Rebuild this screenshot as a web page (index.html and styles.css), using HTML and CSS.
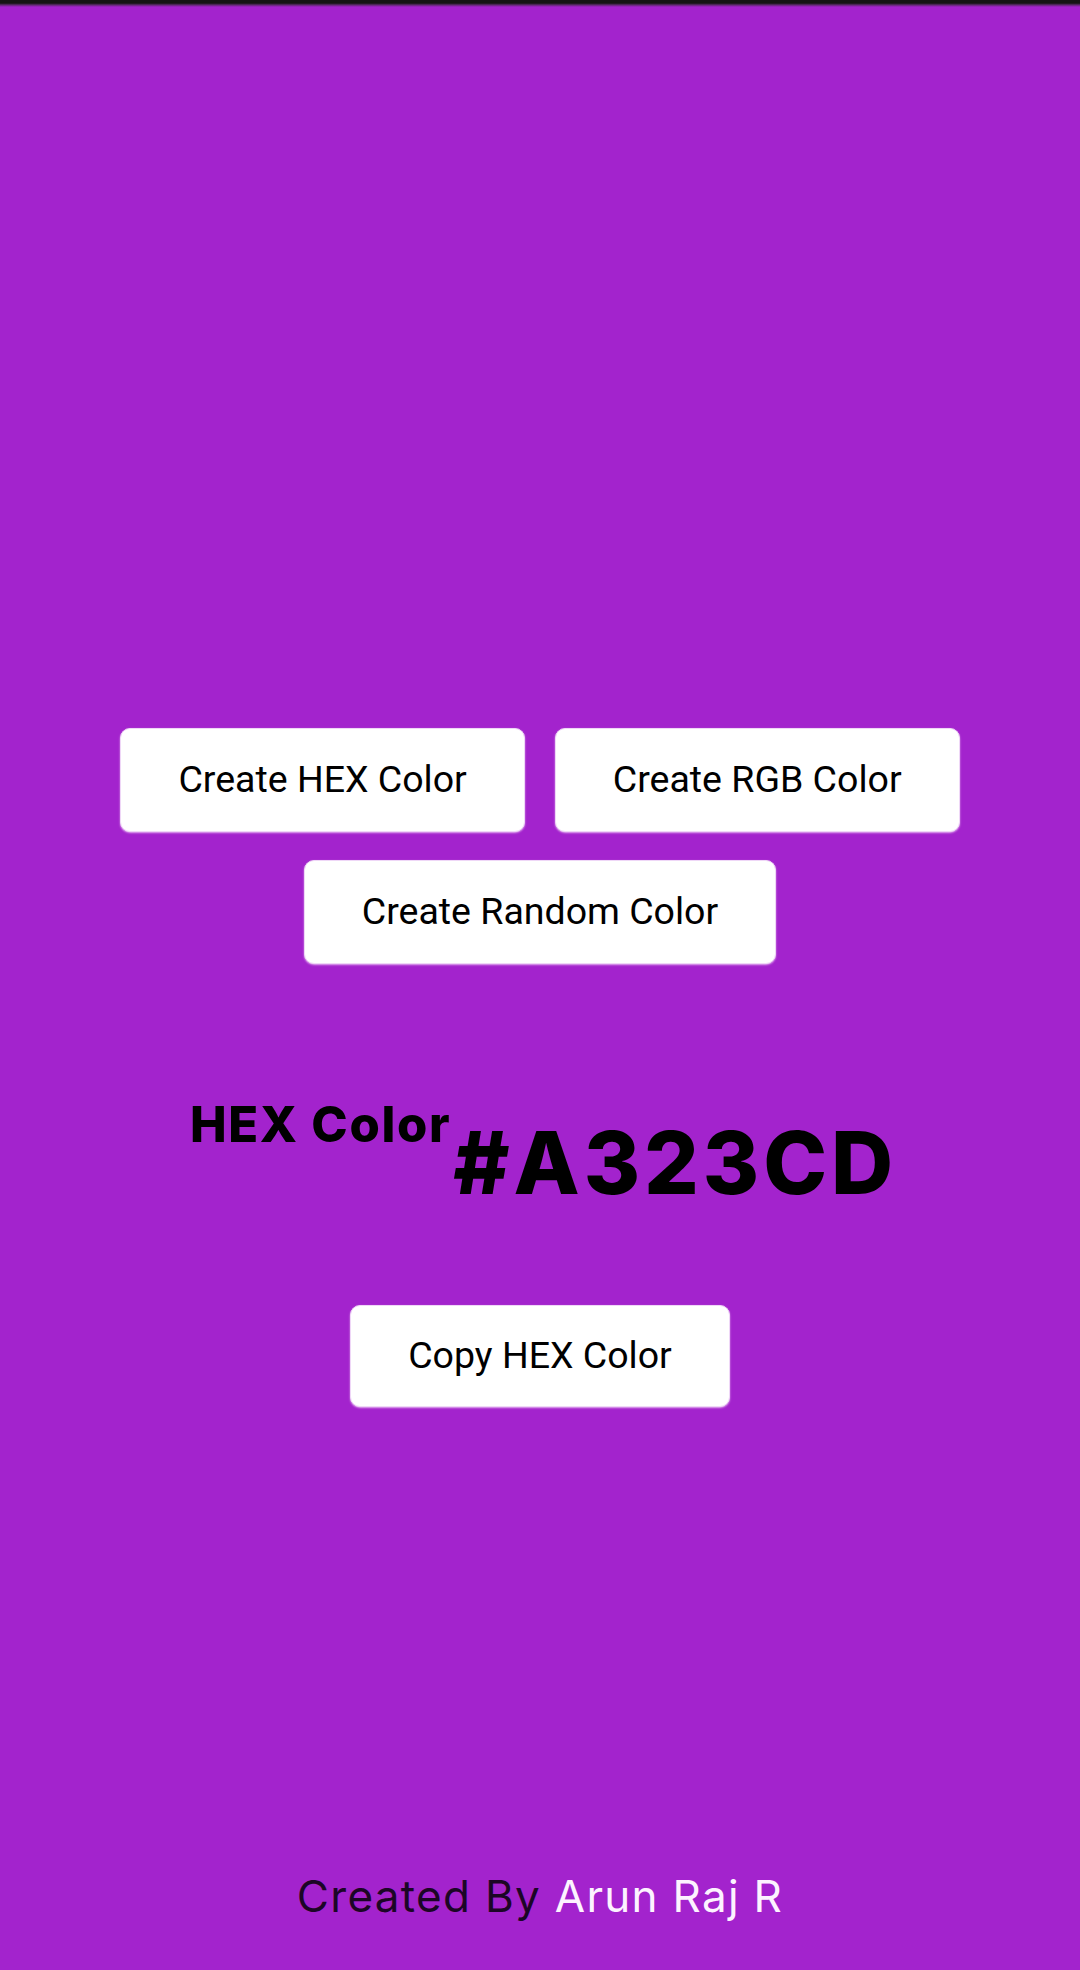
FILE: index.html
```html
<!DOCTYPE html>
<html lang="en">
<head>
<meta charset="utf-8">
<title>Color Generator</title>
<link rel="stylesheet" href="styles.css">
</head>
<body>
<div class="page">
  <div class="statusbar"></div>
  <main class="main">
    <div class="buttons">
      <div class="row">
        <button class="btn">Create HEX Color</button>
        <button class="btn">Create RGB Color</button>
      </div>
      <div class="row">
        <button class="btn">Create Random Color</button>
      </div>
    </div>
    <div class="result">
      <span class="label">HEX Color</span>
      <span class="value">#A323CD</span>
    </div>
    <div class="row copy-row">
      <button class="btn btn-copy">Copy HEX Color</button>
    </div>
  </main>
  <footer class="footer">
    <span class="by">Created By</span> <span class="name">Arun Raj R</span>
  </footer>
</div>
</body>
</html>
```

FILE: styles.css
```css
html, body {
  margin: 0;
  padding: 0;
  background: #a323cd;
}

.page {
  min-height: 1970px;
  display: flex;
  flex-direction: column;
  background: #a323cd;
}

.statusbar {
  height: 7px;
  background: linear-gradient(#141414 0, #141414 45%, #5a2a6a 70%, #a323cd 100%);
}

.main {
  display: flex;
  flex-direction: column;
  align-items: center;
  padding-top: 721px;
}

.buttons {
  display: flex;
  flex-direction: column;
  gap: 28px;
}

.row {
  display: flex;
  justify-content: center;
  gap: 30px;
}

.btn {
  box-sizing: border-box;
  height: 104px;
  padding: 0 57px;
  background: #ffffff;
  border: 1px solid #efd7f7;
  border-radius: 10px;
  box-shadow: 0 1px 2px rgba(255, 235, 255, 0.7);
  font-family: Roboto, "Noto Sans", sans-serif;
  font-size: 37.5px;
  font-weight: 400;
  color: #000;
  line-height: 1;
  cursor: pointer;
}

.result {
  display: flex;
  align-items: flex-start;
  justify-content: center;
  margin-top: 136px;
  padding-left: 7px;
  color: #000;
  font-family: Inter, "Noto Sans", sans-serif;
  font-weight: 800;
  line-height: 1;
}

.label {
  font-size: 49px;
  letter-spacing: 1.7px;
}

.value {
  font-size: 86px;
  letter-spacing: 3.9px;
  margin-top: 20px;
  margin-left: 2px;
}

.copy-row {
  margin-top: 99px;
}

.btn-copy {
  height: 102px;
}

.footer {
  margin-top: auto;
  padding-bottom: 52px;
  text-align: center;
  font-family: Inter, "Noto Sans", sans-serif;
  font-size: 44px;
  line-height: 1;
  letter-spacing: 1.3px;
}

.by {
  color: #1c0626;
}

.name {
  color: #fdf3ff;
}
```
